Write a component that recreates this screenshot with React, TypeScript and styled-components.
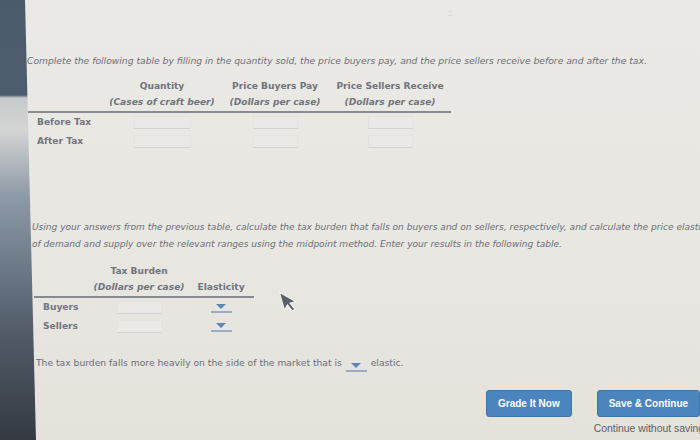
import styled, { createGlobalStyle } from "styled-components";

const Global = createGlobalStyle`
  html, body {
    margin: 0;
    padding: 0;
    width: 700px;
    height: 440px;
    overflow: hidden;
    background: #e8e6e1;
  }
  * { box-sizing: border-box; }
`;

function App() {
  return (
    <>
      <Global />
      <Screen>
        <Bezel />
        <Page>
          <Dots>⁚⁚</Dots>
          <Instruction $indent={2} $top={52}>
            Complete the following table by filling in the quantity sold, the price buyers pay, and the price sellers
            receive before and after the tax.
          </Instruction>

          <Grid $indent={3} $top={9} $cols="75px 118px 108px 122px">
            <HeadCell />
            <HeadCell>Quantity</HeadCell>
            <HeadCell>Price Buyers Pay</HeadCell>
            <HeadCell>Price Sellers Receive</HeadCell>
            <HeadCell $sub $rule />
            <HeadCell $sub $rule>(Cases of craft beer)</HeadCell>
            <HeadCell $sub $rule>(Dollars per case)</HeadCell>
            <HeadCell $sub $rule>(Dollars per case)</HeadCell>

            <RowLabel>Before Tax</RowLabel>
            <Cell><Field $w={57} /></Cell>
            <Cell><Field $w={45} /></Cell>
            <Cell><Field $w={45} /></Cell>
            <RowLabel>After Tax</RowLabel>
            <Cell><Field $w={57} /></Cell>
            <Cell><Field $w={45} /></Cell>
            <Cell><Field $w={45} /></Cell>
          </Grid>

          <Instruction $indent={7} $top={68} $size={9.05} $nowrap>
            Using your answers from the previous table, calculate the tax burden that falls on buyers and on sellers,
            respectively, and calculate the price elasticities
            <br />
            of demand and supply over the relevant ranges using the midpoint method. Enter your results in the
            following table.
          </Instruction>

          <Grid $indent={9} $top={10} $cols="56px 98px 66px">
            <HeadCell />
            <HeadCell>Tax Burden</HeadCell>
            <HeadCell />
            <HeadCell $sub $rule />
            <HeadCell $sub $rule>(Dollars per case)</HeadCell>
            <HeadCell $rule>Elasticity</HeadCell>

            <RowLabel>Buyers</RowLabel>
            <Cell><Field $w={45} /></Cell>
            <Cell><Drop /></Cell>
            <RowLabel>Sellers</RowLabel>
            <Cell><Field $w={45} /></Cell>
            <Cell><Drop /></Cell>
          </Grid>

          <Sentence>
            The tax burden falls more heavily on the side of the market that is <Drop $inline /> elastic.
          </Sentence>

          <Actions>
            <Button>Grade It Now</Button>
            <SaveGroup>
              <Button>Save &amp; Continue</Button>
              <SkipLink>Continue without saving</SkipLink>
            </SaveGroup>
          </Actions>

          <Cursor viewBox="0 0 12 20" width="15" height="25">
            <path
              d="M1 1 L1 16 L4.5 12.5 L7 18.5 L9.2 17.5 L6.8 11.8 L11.5 11.8 Z"
              fill="#59606c"
              stroke="#f2f2f0"
              strokeWidth="0.9"
              strokeLinejoin="round"
            />
          </Cursor>
        </Page>
      </Screen>
    </>
  );
}

export default App;

const Screen = styled.div`
  display: flex;
  width: 700px;
  height: 440px;
  overflow: hidden;
`;

const Bezel = styled.div`
  position: relative;
  flex: 0 0 25px;
  z-index: 2;
  background: linear-gradient(
    180deg,
    #4c5b6c 0px,
    #4e5d6d 95px,
    #c7cacb 98px,
    #d3d5d4 130px,
    #aab1b8 170px,
    #8e9aa7 195px,
    #6f7c8a 260px,
    #4f5966 340px,
    #353a41 440px
  );
  &::after {
    content: "";
    position: absolute;
    top: 0;
    left: 25px;
    width: 11px;
    height: 440px;
    background: inherit;
    clip-path: polygon(0 0, 0 0, 100% 100%, 0 100%);
  }
`;

const Page = styled.div`
  position: relative;
  flex: 1;
  overflow: hidden;
  background: linear-gradient(180deg, #ebe9e5 0%, #e9e7e2 50%, #e5e2dc 100%);
  color: #6a6e78;
  font-family: "DejaVu Sans", Verdana, sans-serif;
`;

const Dots = styled.div`
  position: absolute;
  top: 10px;
  left: 423px;
  font-size: 7px;
  color: #a7a9ad;
`;

const Instruction = styled.p<{ $indent: number; $top: number; $size?: number; $nowrap?: boolean }>`
  margin: ${(p) => p.$top}px 0 0 ${(p) => p.$indent}px;
  width: 680px;
  font-size: ${(p) => p.$size ?? 9.2}px;
  font-style: italic;
  line-height: 17px;
  white-space: ${(p) => (p.$nowrap ? "nowrap" : "normal")};
`;

const Grid = styled.div<{ $indent: number; $top: number; $cols: string }>`
  display: grid;
  grid-template-columns: ${(p) => p.$cols};
  width: max-content;
  margin: ${(p) => p.$top}px 0 0 ${(p) => p.$indent}px;
`;

const HeadCell = styled.div<{ $sub?: boolean; $rule?: boolean }>`
  line-height: 16px;
  text-align: center;
  white-space: nowrap;
  font-size: 9.1px;
  font-weight: bold;
  font-style: ${(p) => (p.$sub ? "italic" : "normal")};
  color: #70747d;
  border-bottom: ${(p) => (p.$rule ? "2px solid #878a93" : "none")};
  height: ${(p) => (p.$rule ? "19px" : "16px")};
`;

const RowLabel = styled.div`
  height: 19px;
  line-height: 19px;
  padding-left: 9px;
  font-size: 9.1px;
  font-weight: bold;
  color: #72767e;
  white-space: nowrap;
`;

const Cell = styled.div`
  height: 19px;
  display: flex;
  align-items: center;
  justify-content: center;
`;

const Field = styled.div<{ $w: number }>`
  width: ${(p) => p.$w}px;
  height: 13px;
  border: 1px solid #e4e3df;
  border-bottom: 1px solid #d2d3d3;
  background: #eae9e5;
`;

const Drop = styled.span<{ $inline?: boolean }>`
  display: inline-flex;
  align-items: center;
  justify-content: center;
  vertical-align: ${(p) => (p.$inline ? "-2px" : "-3px")};
  width: 21px;
  height: 11px;
  margin: ${(p) => (p.$inline ? "0 1px" : "0")};
  border-bottom: 2px solid #97aec6;
  &::before {
    content: "";
    border-left: 5px solid transparent;
    border-right: 5px solid transparent;
    border-top: 5px solid #5a86b8;
  }
`;

const Sentence = styled.p`
  margin: 18px 0 0 11px;
  font-size: 9.2px;
  line-height: 17px;
  color: #6a6e78;
  white-space: nowrap;
`;

const Actions = styled.div`
  display: flex;
  align-items: flex-start;
  gap: 25px;
  margin: 18px 0 0 461px;
`;

const SaveGroup = styled.div`
  display: flex;
  flex-direction: column;
  gap: 6px;
`;

const Button = styled.button`
  height: 27px;
  padding: 0 11px;
  border: 1px solid #3f74aa;
  border-radius: 3px;
  background: #4c84bd;
  color: #ffffff;
  font-family: "Liberation Sans", Arial, sans-serif;
  font-size: 10px;
  font-weight: bold;
  white-space: nowrap;
  width: max-content;
`;

const SkipLink = styled.span`
  margin-left: -3px;
  font-family: "Liberation Sans", Arial, sans-serif;
  font-size: 10.4px;
  color: #5a5e66;
  white-space: nowrap;
`;

const Cursor = styled.svg`
  position: absolute;
  top: 291px;
  left: 253px;
  transform-origin: 1px 1px;
  transform: rotate(-16deg);
`;
